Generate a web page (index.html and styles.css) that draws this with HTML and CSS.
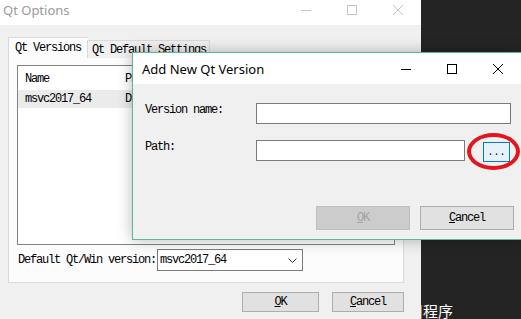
FILE: index.html
```html
<!DOCTYPE html>
<html>
<head>
<meta charset="utf-8">
<link rel="stylesheet" href="styles.css">
</head>
<body>
<div class="desk">
  <div class="desk-text">用程序</div>

  <div class="win">
    <div class="titlebar win-title">
      <span class="title inactive">Qt Options</span>
      <div class="ctrls inactive-ctrls">
        <span class="ctrl"><svg width="10" height="10" viewBox="0 0 10 10"><path d="M0 5.5H10" stroke="currentColor" stroke-width="1"/></svg></span>
        <span class="ctrl"><svg width="10" height="10" viewBox="0 0 10 10"><rect x="0.5" y="0.5" width="9" height="9" fill="none" stroke="currentColor"/></svg></span>
        <span class="ctrl"><svg width="10" height="10" viewBox="0 0 10 10"><path d="M0 0L10 10M10 0L0 10" stroke="currentColor" stroke-width="1"/></svg></span>
      </div>
    </div>
    <div class="win-body">
      <div class="tabs">
        <div class="tab active">Qt Versions</div>
        <div class="tab">Qt Default Settings</div>
      </div>
      <div class="pane">
        <div class="list">
          <div class="list-head">
            <span class="col-name">Name</span>
            <span class="col-path">Path</span>
          </div>
          <div class="list-row">
            <span class="col-name">msvc2017_64</span>
            <span class="col-path">D:\Qt\5.12.0\msvc2017_64</span>
          </div>
        </div>
        <div class="combo-row">
          <span class="mono">Default Qt/Win version:</span>
          <div class="combo">
            <span class="mono">msvc2017_64</span>
            <svg class="chev" width="9" height="5" viewBox="0 0 9 5"><path d="M0.5 0.5L4.5 4.5L8.5 0.5" fill="none" stroke="#333" stroke-width="1"/></svg>
          </div>
        </div>
      </div>
      <div class="btn-row">
        <div class="btn btn-ok"><span class="mono"><u>O</u>K</span></div>
        <div class="btn btn-cancel"><span class="mono"><u>C</u>ancel</span></div>
      </div>
    </div>
  </div>

  <div class="dialog">
    <div class="titlebar dlg-title">
      <span class="title">Add New Qt Version</span>
      <div class="ctrls">
        <span class="ctrl"><svg width="10" height="10" viewBox="0 0 10 10"><path d="M0 5.5H10" stroke="currentColor" stroke-width="1"/></svg></span>
        <span class="ctrl"><svg width="10" height="10" viewBox="0 0 10 10"><rect x="0.5" y="0.5" width="9" height="9" fill="none" stroke="currentColor"/></svg></span>
        <span class="ctrl"><svg width="10" height="10" viewBox="0 0 10 10"><path d="M0 0L10 10M10 0L0 10" stroke="currentColor" stroke-width="1"/></svg></span>
      </div>
    </div>
    <div class="dlg-body">
      <div class="form">
        <span class="mono lbl">Version name:</span>
        <div class="field"></div>
        <span class="mono lbl">Path:</span>
        <div class="path-row">
          <div class="field path-field"></div>
          <div class="browse"><span class="mono">...</span></div>
        </div>
      </div>
      <div class="dlg-btns">
        <div class="btn dbtn disabled"><span class="mono"><u>O</u>K</span></div>
        <div class="btn dbtn"><span class="mono"><u>C</u>ancel</span></div>
      </div>
    </div>
  </div>

  <div class="mark"></div>
</div>
</body>
</html>
```
FILE: styles.css
```css
* { box-sizing: border-box; }
html, body { margin: 0; padding: 0; }
body { width: 521px; height: 319px; overflow: hidden; background: #242424; }
.desk { position: relative; width: 521px; height: 319px; }

.mono {
  font-family: "Liberation Mono", monospace;
  font-size: 12px;
  letter-spacing: -1.2px;
  color: #000;
  white-space: nowrap;
}

.desk-text {
  position: absolute; left: 408px; top: 302px;
  font-family: "Noto Sans CJK SC", sans-serif; font-size: 15px; line-height: 18px; color: #fff;
  z-index: 0;
}

.win {
  position: absolute; left: 0; top: 0; width: 421px; height: 330px;
  background: #f0f0f0; z-index: 1;
  display: flex; flex-direction: column;
}
.titlebar {
  height: 25px; background: #fff;
  display: flex; align-items: center; justify-content: space-between;
  flex: none;
}
.win-title { padding-bottom: 5px; }
.title {
  font-family: "Noto Sans", sans-serif; font-size: 13px; color: #000;
  padding-left: 3px;
}
.title.inactive { color: #9a9a9a; }
.ctrls { display: flex; height: 100%; }
.ctrl { width: 46px; display: flex; align-items: center; justify-content: center; color: #000; }
.inactive-ctrls .ctrl { color: #c4c4c4; }

.win-body { padding: 12px 17px 0 8px; display: flex; flex-direction: column; }
.tabs { display: flex; align-items: flex-end; position: relative; z-index: 2; margin-bottom: -1px; }
.tab {
  height: 18px; border: 1px solid #d9d9d9; border-bottom: none;
  background: #f0f0f0; padding: 2px 0 0 4px;
  font-family: "Liberation Mono", monospace; font-size: 12px; letter-spacing: -1.2px;
  width: 123px; margin-left: -1px; white-space: nowrap; overflow: hidden;
}
.tab.active {
  height: 21px; background: #fcfcfc; width: 80px; margin-left: 0;
  padding: 3px 0 0 6px; border-right: none;
}
.pane {
  width: 396px; height: 226px; border: 1px solid #d9d9d9; background: #fcfcfc;
  padding: 7px 8px 0 8px; display: flex; flex-direction: column;
}
.list {
  height: 180px; border: 1px solid #828282; background: #fff;
  font-family: "Liberation Mono", monospace; font-size: 12px; letter-spacing: -1.2px;
}
.list-head, .list-row { display: flex; align-items: center; white-space: nowrap; }
.list-head { height: 24px; padding-top: 1px; }
.list-row { height: 18px; background: #ebebeb; }
.col-name { width: 107px; padding-left: 7px; }
.col-path { width: 8px; overflow: hidden; }

.combo-row { display: flex; align-items: center; margin-top: 4px; padding-left: 1px; }
.combo {
  margin-left: 1px; width: 146px; height: 22px; border: 1px solid #7a7a7a; background: #fff;
  display: flex; align-items: center; justify-content: space-between; padding: 0 5px 0 2px;
}

.btn-row { display: flex; justify-content: flex-end; gap: 13px; margin-top: 9px; }
.btn {
  height: 20px; border: 1px solid #adadad; background: #e1e1e1;
  display: flex; align-items: center; justify-content: center;
}
.btn-ok { width: 77px; }
.btn-cancel { width: 72px; }

.dialog {
  position: absolute; left: 132px; top: 52px; width: 390px; height: 188px;
  border: 1px solid #5cb890; background: #f0f0f0; z-index: 3;
  box-shadow: 0 0 14px rgba(0,0,0,0.28);
  display: flex; flex-direction: column;
}
.dlg-title { height: 31px; }
.dlg-title .title { padding-left: 9px; font-size: 13px; }
.dlg-body {
  flex: 1; padding: 19px 10px 9px 12px;
  display: flex; flex-direction: column; justify-content: space-between;
}
.form {
  display: grid; grid-template-columns: 111px 1fr; row-gap: 16px; align-items: start;
}
.lbl { line-height: 14px; margin-top: 0; }
.field { height: 21px; border: 1px solid #7a7a7a; background: #fff; }
.path-row { display: flex; align-items: flex-start; gap: 18px; }
.path-field { width: 209px; }
.browse {
  width: 27px; height: 20px; border: 1px solid #0078d7; background: #e5f1fb;
  display: flex; align-items: center; justify-content: center; margin-top: 2px;
}
.browse .mono { font-size: 10px; letter-spacing: 0; }
.dlg-btns { display: flex; justify-content: flex-end; gap: 10px; margin-right: -3px; }
.dbtn { width: 94px; height: 24px; }
.dbtn.disabled { background: #cccccc; border-color: #bfbfbf; }
.dbtn.disabled .mono { color: #a3a3a3; }

.mark {
  position: absolute; left: 467px; top: 133px; width: 53px; height: 37px;
  border: 4px solid #e3161e; border-radius: 50%; z-index: 4;
}
```
